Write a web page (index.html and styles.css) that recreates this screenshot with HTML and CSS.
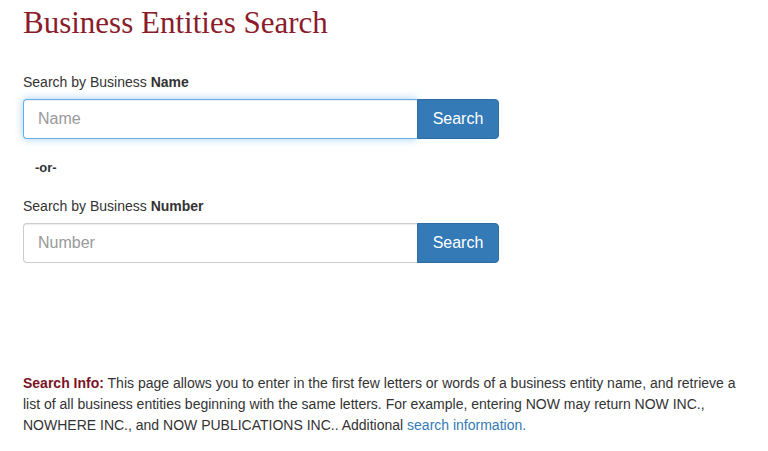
FILE: index.html
```html
<!DOCTYPE html>
<html>
<head>
<meta charset="utf-8">
<link rel="stylesheet" href="styles.css">
</head>
<body>
<div class="page">
  <h1 class="title">Business Entities Search</h1>
  <div class="group first">
    <label class="label">Search by Business <b>Name</b></label>
    <div class="input-group">
      <input class="field focused" type="text" placeholder="Name">
      <button class="btn">Search</button>
    </div>
  </div>
  <div class="or">-or-</div>
  <div class="group second">
    <label class="label">Search by Business <b>Number</b></label>
    <div class="input-group">
      <input class="field" type="text" placeholder="Number">
      <button class="btn">Search</button>
    </div>
  </div>
  <p class="info"><b class="info-head">Search Info:</b> This page allows you to enter in the first few letters or words of a business entity name, and retrieve a list of all business entities beginning with the same letters. For example, entering NOW may return NOW INC., NOWHERE INC., and NOW PUBLICATIONS INC.. Additional <a href="#" class="link">search information.</a></p>
</div>
</body>
</html>
```
FILE: styles.css
```css
html, body {
  margin: 0;
  padding: 0;
  background: #fff;
}
body {
  font-family: "Liberation Sans", Arial, sans-serif;
  font-size: 14px;
  color: #333;
}
.page {
  padding: 0 23px;
}
.title {
  margin: 0;
  padding-top: 6px;
  font-family: "Liberation Serif", "Times New Roman", serif;
  font-weight: normal;
  font-size: 31px;
  line-height: 34px;
  color: #8a1c2b;
}
.group.first {
  margin-top: 32px;
}
.label {
  display: block;
  font-size: 14px;
  line-height: 20px;
  margin-bottom: 7px;
}
.label b {
  font-weight: bold;
}
.input-group {
  display: flex;
  width: 476px;
  height: 40px;
}
.field {
  flex: 1;
  box-sizing: border-box;
  height: 40px;
  margin: 0;
  padding: 0 14px;
  border: 1px solid #ccc;
  border-right: none;
  border-radius: 4px 0 0 4px;
  font-family: "Liberation Sans", Arial, sans-serif;
  font-size: 16px;
  color: #555;
  outline: none;
  box-shadow: inset 0 1px 1px rgba(0,0,0,.075);
}
.field::placeholder {
  color: #999;
}
.field.focused {
  border-color: #66afe9;
  box-shadow: inset 0 1px 1px rgba(0,0,0,.075), 0 0 8px rgba(102,175,233,.6);
}
.btn {
  box-sizing: border-box;
  width: 82px;
  height: 40px;
  margin: 0;
  padding: 0;
  border: 1px solid #2e6da4;
  border-radius: 0 4px 4px 0;
  background: #337ab7;
  color: #fff;
  font-family: "Liberation Sans", Arial, sans-serif;
  font-size: 16px;
}
.or {
  margin: 19px 0 0 12px;
  font-weight: bold;
  font-size: 13px;
  line-height: 20px;
}
.group.second {
  margin-top: 18px;
}
.info {
  margin: 110px 0 0;
  font-size: 14px;
  line-height: 21px;
}
.info-head {
  color: #7a1425;
}
.link {
  color: #337ab7;
  text-decoration: none;
}
```
